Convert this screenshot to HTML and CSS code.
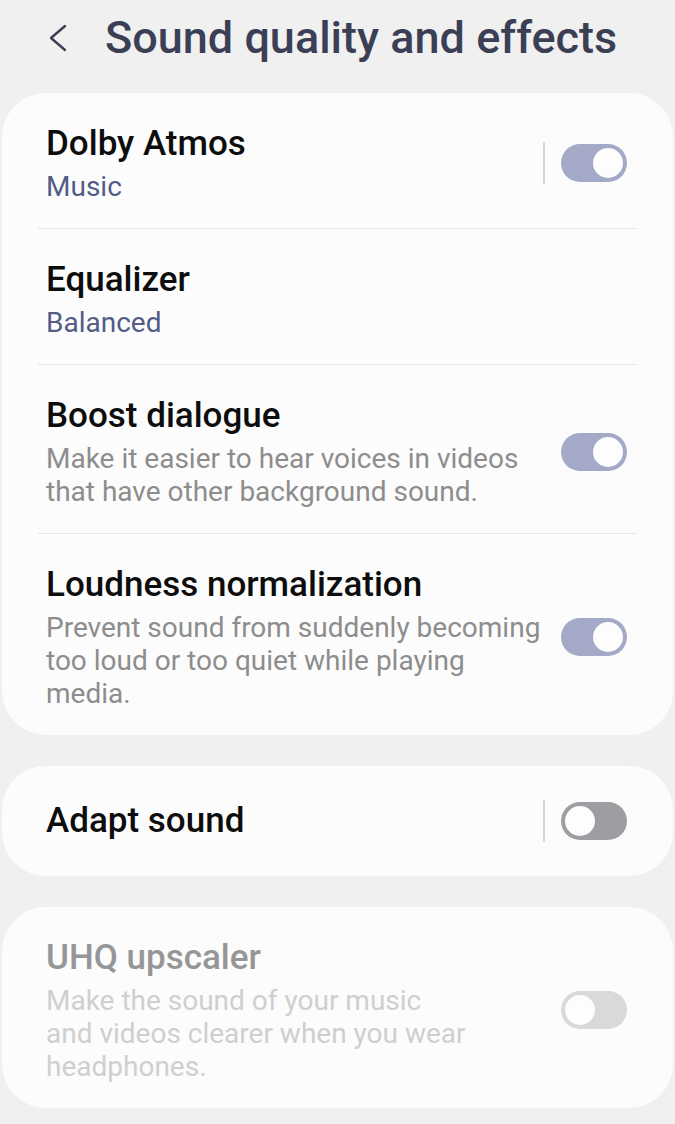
FILE: index.html
```html
<!DOCTYPE html>
<html lang="en">
<head>
  <meta charset="UTF-8">
  <meta name="viewport" content="width=device-width, initial-scale=1.0">
  <title>Sound quality and effects</title>
  <link rel="stylesheet" href="styles.css">
</head>
<body>

<header class="topbar">
  <button class="back" aria-label="Back">
    <svg width="22" height="28" viewBox="0 0 22 28">
      <path d="M19 2 L5 14 L19 26" fill="none" stroke="#3b3f56" stroke-width="2.4" stroke-linecap="round" stroke-linejoin="round"/>
    </svg>
  </button>
  <h1>Sound quality and effects</h1>
</header>

<div class="card">
  <div class="row">
    <div class="text">
      <div class="label">Dolby Atmos</div>
      <div class="value">Music</div>
    </div>
    <span class="divider"></span>
    <span class="switch on"><span class="knob"></span></span>
  </div>

  <div class="row">
    <div class="text">
      <div class="label">Equalizer</div>
      <div class="value">Balanced</div>
    </div>
  </div>

  <div class="row">
    <div class="text">
      <div class="label">Boost dialogue</div>
      <div class="desc">Make it easier to hear voices in videos<br>that have other background sound.</div>
    </div>
    <span class="switch on"><span class="knob"></span></span>
  </div>

  <div class="row">
    <div class="text">
      <div class="label">Loudness normalization</div>
      <div class="desc">Prevent sound from suddenly becoming<br>too loud or too quiet while playing<br>media.</div>
    </div>
    <span class="switch on"><span class="knob"></span></span>
  </div>
</div>

<div class="card">
  <div class="row single">
    <div class="text">
      <div class="label">Adapt sound</div>
    </div>
    <span class="divider"></span>
    <span class="switch"><span class="knob"></span></span>
  </div>
</div>

<div class="card">
  <div class="row disabled">
    <div class="text">
      <div class="label">UHQ upscaler</div>
      <div class="desc">Make the sound of your music<br>and videos clearer when you wear<br>headphones.</div>
    </div>
    <span class="switch"><span class="knob"></span></span>
  </div>
</div>

</body>
</html>
```

FILE: styles.css
```css
body {
    margin: 0;
    background-color: #f0f0f0;
    font-family: Roboto, "Noto Sans", sans-serif;
    color: #111;
}

/* cabecalho */
.topbar {
    display: flex;
    align-items: flex-start;
    height: 93px;
    box-sizing: border-box;
    padding-top: 13px;
}

.back {
    border: none;
    background: none;
    padding: 0;
    margin: 11px 0 0 46px;
    width: 22px;
    height: 28px;
}

.topbar h1 {
    margin: 0 0 0 37px;
    font-size: 45px;
    line-height: 50px;
    font-weight: 500;
    color: #3b3f56;
    letter-spacing: 0;
}

/* cartoes */
.card {
    margin: 0 2px 31px;
    background-color: #fcfcfc;
    border-radius: 44px;
}

.row {
    display: flex;
    align-items: center;
    margin: 0 36px;
    padding: 30px 10px 25px 8px;
}

.row + .row {
    border-top: 1px solid #e6e6e6;
}

.row.single {
    padding-top: 34px;
    padding-bottom: 34px;
}

.text {
    flex: 1;
}

.label {
    font-size: 35px;
    line-height: 42px;
    font-weight: 500;
    color: #0d0d0d;
}

.value {
    margin-top: 5px;
    font-size: 28px;
    line-height: 33px;
    color: #535c87;
}

.desc {
    margin-top: 5px;
    font-size: 28px;
    line-height: 33px;
    color: #8d8d8d;
}

.divider {
    width: 2px;
    height: 42px;
    background-color: #d6d6d6;
    margin-right: 16px;
}

/* interruptores */
.switch {
    display: flex;
    align-items: center;
    justify-content: flex-start;
    width: 66px;
    height: 38px;
    box-sizing: border-box;
    padding: 0 4px;
    border-radius: 19px;
    background-color: #9e9ea2;
}

.switch.on {
    justify-content: flex-end;
    background-color: #a3a9c6;
}

.knob {
    width: 30px;
    height: 30px;
    border-radius: 50%;
    background-color: #fdfdfd;
}

.disabled .label {
    color: #969696;
}

.disabled .desc {
    color: #cfcfcf;
}

.disabled .switch {
    background-color: #d9d9d9;
}
```
